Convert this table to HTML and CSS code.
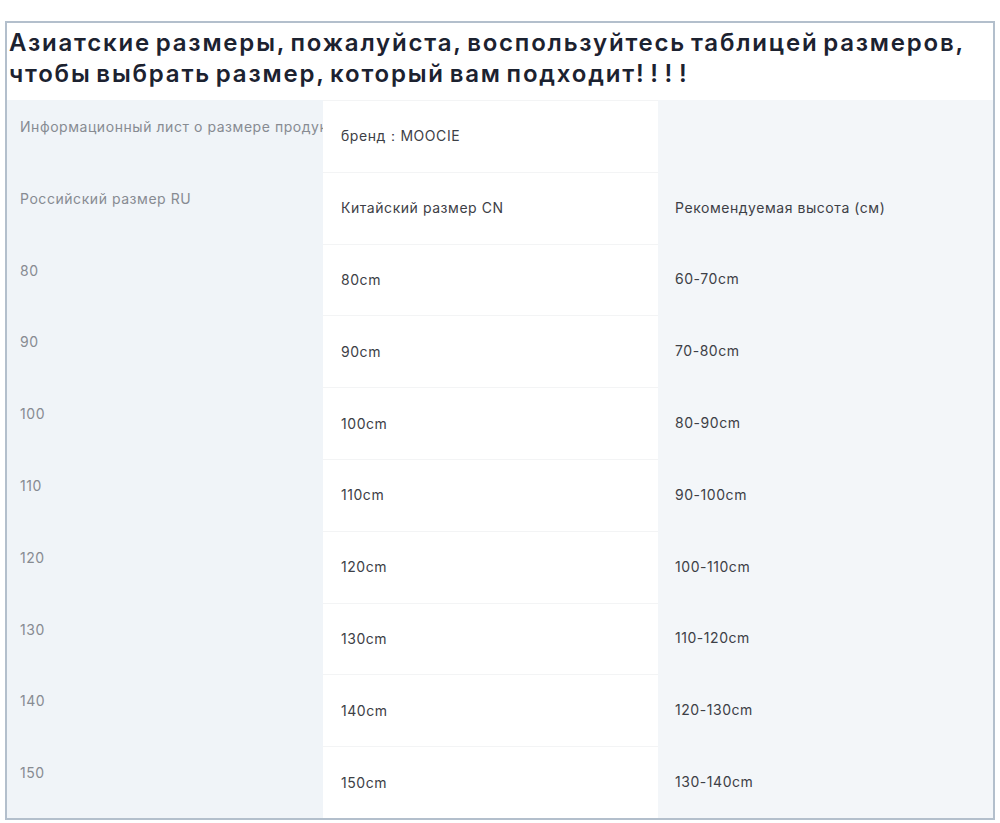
FILE: index.html
```html
<!DOCTYPE html>
<html lang="ru">
<head>
<meta charset="utf-8">
<title>Размеры</title>
<link rel="stylesheet" href="styles.css">
</head>
<body>
<div class="frame">
  <h1 class="title">Азиатские размеры, пожалуйста, воспользуйтесь таблицей размеров,<br>чтобы выбрать размер, который вам подходит! ! ! !</h1>
  <div class="table">
    <div class="c1">Информационный лист о размере продукта</div>
    <div class="c2">бренд：MOOCIE</div>
    <div class="c3"></div>

    <div class="c1">Российский размер RU</div>
    <div class="c2">Китайский размер CN</div>
    <div class="c3">Рекомендуемая высота (см)</div>

    <div class="c1">80</div>
    <div class="c2">80cm</div>
    <div class="c3">60-70cm</div>

    <div class="c1">90</div>
    <div class="c2">90cm</div>
    <div class="c3">70-80cm</div>

    <div class="c1">100</div>
    <div class="c2">100cm</div>
    <div class="c3">80-90cm</div>

    <div class="c1">110</div>
    <div class="c2">110cm</div>
    <div class="c3">90-100cm</div>

    <div class="c1">120</div>
    <div class="c2">120cm</div>
    <div class="c3">100-110cm</div>

    <div class="c1">130</div>
    <div class="c2">130cm</div>
    <div class="c3">110-120cm</div>

    <div class="c1">140</div>
    <div class="c2">140cm</div>
    <div class="c3">120-130cm</div>

    <div class="c1">150</div>
    <div class="c2">150cm</div>
    <div class="c3">130-140cm</div>
  </div>
</div>
</body>
</html>
```

FILE: styles.css
```css
html, body {
  margin: 0;
  padding: 0;
  background: #ffffff;
}

body {
  font-family: Inter, "Noto Sans", "DejaVu Sans", sans-serif;
}

.frame {
  box-sizing: border-box;
  width: 990px;
  margin: 21px 0 0 5px;
  border: 2px solid #b3bfcc;
  background: #ffffff;
}

.title {
  margin: 0;
  padding: 4px 0 11px 2px;
  font-size: 24px;
  line-height: 31px;
  font-weight: 600;
  letter-spacing: 1.8px;
  word-spacing: -3px;
  color: #1c2230;
  white-space: nowrap;
}

.table {
  display: grid;
  grid-template-columns: 316px 335px 335px;
  grid-auto-rows: 71.8px;
  font-size: 14px;
  line-height: 20px;
  letter-spacing: 0.55px;
}

.c1 {
  background: #f0f4f8;
  color: #878b92;
  padding: 17px 11px 0 13px;
  white-space: nowrap;
  overflow: hidden;
  min-width: 0;
}

.c2 {
  background: #ffffff;
  color: #3d4046;
  padding-left: 18px;
  display: flex;
  align-items: center;
  border-top: 1px solid #f3f4f5;
  box-sizing: border-box;
}

.c3 {
  background: #f3f6f9;
  color: #3d4046;
  padding-left: 17px;
  display: flex;
  align-items: center;
}
```
